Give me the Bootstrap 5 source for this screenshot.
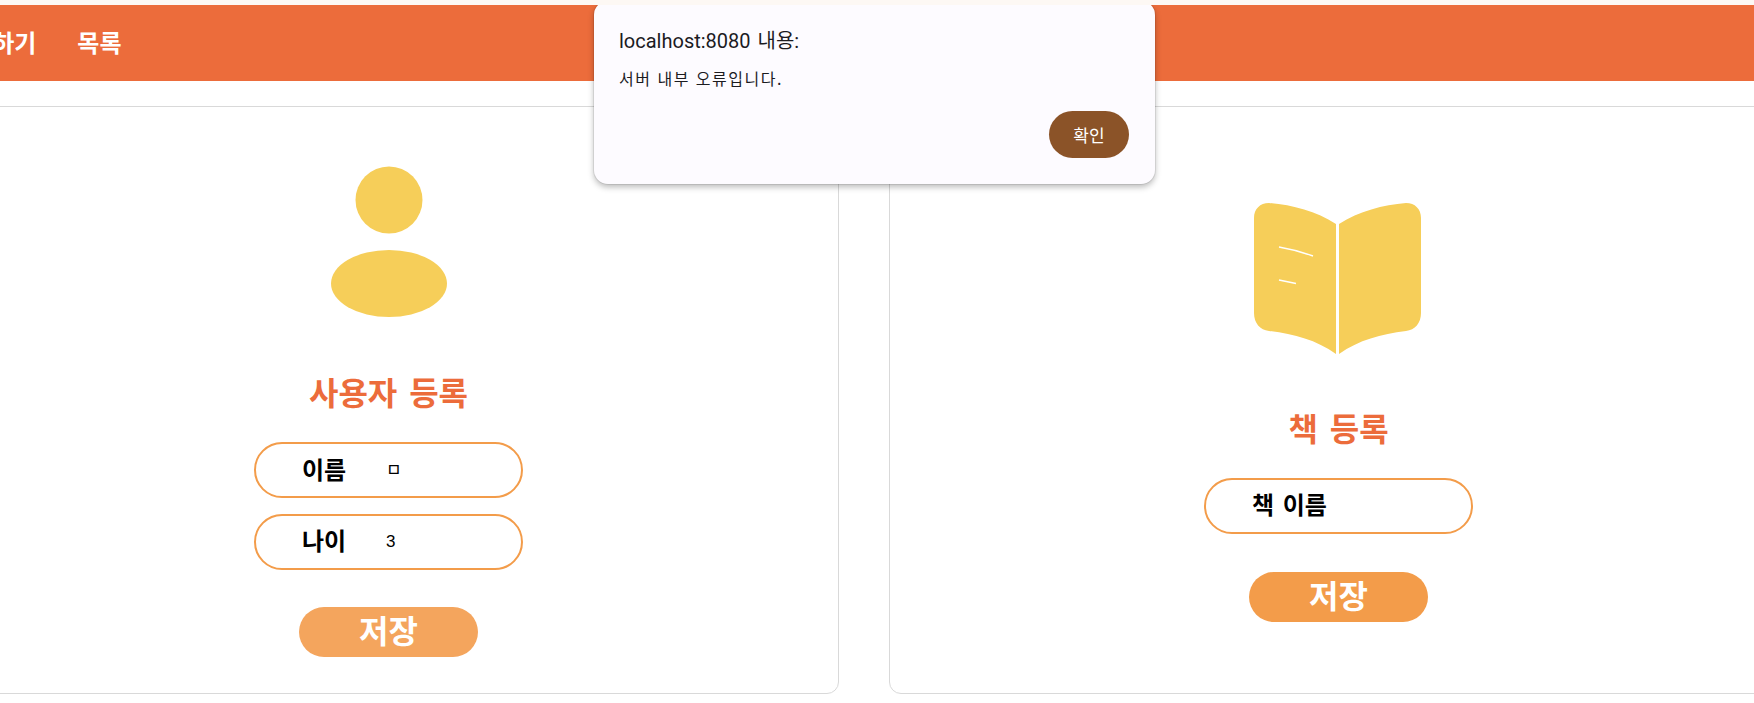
<!DOCTYPE html>
<html lang="ko">
<head>
  <meta charset="UTF-8" />
  <meta name="viewport" content="width=device-width, initial-scale=1" />
  <title>사용자 / 책 등록</title>
  <link href="https://cdn.jsdelivr.net/npm/bootstrap@5.3.0/dist/css/bootstrap.min.css" rel="stylesheet">
  <style>
    html, body {
      height: 703px;
      overflow: hidden;
    }
    body {
      background: #fff;
      border-top: 5px solid #fdf8f4;
      font-family: "Liberation Sans", "Noto Sans CJK KR", sans-serif;
      position: relative;
    }
    .top-bar {
      background: #ec6c3b;
      height: 76px;
      margin-left: -60px;
      padding-left: 8px;
      padding-top: 2px;
      gap: 41px;
    }
    .top-bar a {
      color: #fff;
      font-size: 24px;
      font-weight: 700;
      text-decoration: none;
    }
    .panels {
      width: 1847px;
      margin-left: -60px;
      margin-top: 25px;
      gap: 50px;
    }
    .panel {
      width: 899px;
      height: 588px;
      flex: none;
      border: 1px solid #d9d9d9;
      border-radius: 12px;
    }
    .panel-user { padding-top: 59px; padding-right: 2px; }
    .panel-book { padding-top: 96px; }
    .art-user { width: 116px; height: 151px; margin-left: 1px; }
    .art-book { width: 168px; height: 151px; margin-right: 1px; }
    .panel-title {
      color: #ec6c3b;
      font-size: 32px;
      font-weight: 700;
      line-height: 46px;
      word-spacing: 3px;
      margin: 0;
    }
    .panel-user .panel-title { margin-top: 54px; margin-bottom: 25px; }
    .panel-book .panel-title { margin-top: 53px; margin-bottom: 25px; }
    .pill-field {
      width: 269px;
      height: 56px;
      border: 2px solid #f39c4a;
      border-radius: 28px;
      padding-left: 46px;
      margin-bottom: 16px;
    }
    .pill-first { padding-top: 2px; }
    .pill-field label {
      width: 84px;
      flex: none;
      color: #000;
      font-size: 24px;
      font-weight: 700;
    }
    .pill-field input {
      border: 0;
      outline: 0;
      padding: 0;
      min-width: 0;
      width: 100px;
      color: #000;
      font-size: 17px;
      background: transparent;
    }
    .pill-field .book-name {
      width: 200px;
      font-size: 24px;
      font-weight: 700;
      word-spacing: 2px;
    }
    .book-name::placeholder { color: #000; opacity: 1; }
    .save-btn {
      width: 179px;
      height: 50px;
      border: 0;
      border-radius: 25px;
      background: #f39c4a;
      color: #fff;
      font-size: 32px;
      font-weight: 700;
      line-height: 1;
      padding: 0;
    }
    .panel-user .save-btn { background: #f4a55d; margin-top: 21px; }
    .panel-book .save-btn { margin-top: 22px; }
    .alert-box {
      position: absolute;
      left: 594px;
      top: -4px;
      width: 561px;
      height: 183px;
      background: #fdfbff;
      border-radius: 14px;
      box-shadow: 0 0 0 1px rgba(0,0,0,.07), 0 3px 6px rgba(0,0,0,.28);
      padding: 28px 26px 26px 25px;
      color: #1c1b1f;
    }
    .alert-origin {
      font-family: Roboto, "Noto Sans CJK KR", sans-serif;
      font-size: 20px;
      line-height: 24px;
      word-spacing: 2px;
      margin: 0;
    }
    .alert-msg {
      font-family: "Noto Sans CJK KR", sans-serif;
      font-size: 16px;
      line-height: 22px;
      letter-spacing: 1.5px;
      margin: 14px 0 0;
    }
    .alert-ok {
      width: 80px;
      height: 47px;
      border: 0;
      border-radius: 24px;
      background: #8b5328;
      color: #fff;
      font-family: "Noto Sans CJK KR", sans-serif;
      font-size: 17px;
      padding: 0;
    }
  </style>
</head>
<body>

<nav class="top-bar d-flex align-items-center">
  <a href="#">등록하기</a>
  <a href="#">목록</a>
</nav>

<div class="panels d-flex">
  <div class="panel panel-user d-flex flex-column align-items-center">
    <svg class="art-user" viewBox="0 0 116 151">
      <circle cx="58" cy="34" r="33.5" fill="#f6ce59"/>
      <ellipse cx="58" cy="117.500" rx="58" ry="33.500" fill="#f6ce59"/>
    </svg>
    <h2 class="panel-title">사용자 등록</h2>
    <div class="pill-field pill-first d-flex align-items-center">
      <label for="userName">이름</label>
      <input id="userName" type="text" value="ㅁ">
    </div>
    <div class="pill-field d-flex align-items-center">
      <label for="userAge">나이</label>
      <input id="userAge" type="text" value="3">
    </div>
    <button class="save-btn">저장</button>
  </div>

  <div class="panel panel-book d-flex flex-column align-items-center">
    <svg class="art-book" viewBox="0 0 168 151">
      <path d="M82 21C62 8 38 2 15 0C6 0 0 6 0 15V110C0 120 6 127 15 128C40 131 62 137 82 151Z" fill="#f6ce59"/>
      <path d="M85 21C105 8 129 2 152 0C161 0 167 6 167 15V110C167 120 161 127 152 128C127 131 105 137 85 151Z" fill="#f6ce59"/>
      <path d="M25 44C37 46 48 49 59 53M25 77L42 80.500" fill="none" stroke="#fff" stroke-width="1.500"/>
    </svg>
    <h2 class="panel-title">책 등록</h2>
    <div class="pill-field d-flex align-items-center">
      <input class="book-name" type="text" placeholder="책 이름">
    </div>
    <button class="save-btn">저장</button>
  </div>
</div>

<div class="alert-box d-flex flex-column">
  <p class="alert-origin">localhost:8080 내용:</p>
  <p class="alert-msg">서버 내부 오류입니다.</p>
  <div class="d-flex justify-content-end mt-auto">
    <button class="alert-ok">확인</button>
  </div>
</div>

<script src="https://cdn.jsdelivr.net/npm/bootstrap@5.3.0/dist/js/bootstrap.bundle.min.js"></script>
</body>
</html>
